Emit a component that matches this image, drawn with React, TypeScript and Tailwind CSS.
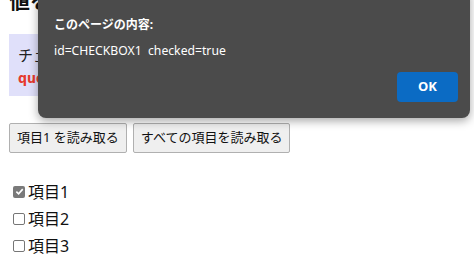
import React from 'react';

const jp = "font-['Noto_Sans','Noto_Sans_CJK_JP',sans-serif]";

function Check({ checked, label }: { checked: boolean; label: string }) {
  return (
    <label className="flex items-center h-[27px] text-[16px] text-[#111]">
      {checked ? (
        <span className="w-[12px] h-[12px] rounded-[2px] bg-[#7a7a7a] flex items-center justify-center ml-[4px] mr-[3px]">
          <svg width="9" height="9" viewBox="0 0 10 10">
            <path d="M1.5 5.2 L4 7.6 L8.6 2.4" stroke="white" strokeWidth="1.8" fill="none" />
          </svg>
        </span>
      ) : (
        <span className="w-[12px] h-[12px] rounded-[2px] border border-[#767676] bg-white ml-[4px] mr-[3px]" />
      )}
      <span>{label}</span>
    </label>
  );
}

export default function App() {
  return (
    <div className={`relative w-[474px] h-[266px] overflow-hidden bg-white ${jp}`}>
      {/* Page */}
      <div className="pl-[9px]">
        <h2 className="text-[21px] font-bold leading-[24px] mt-[-12px] text-[#111]">値を読み取る</h2>
        <div className="mt-[22px] w-[440px] h-[62px] bg-[#e0e0fa] pl-[9px] pt-[10px]">
          <p className="text-[15px] leading-[23px] text-[#222]">チェックボックスの値</p>
          <p className="font-['DejaVu_Sans_Condensed',sans-serif] font-bold text-[14px] leading-[23px] text-[#e63a2e]">querySelector</p>
        </div>
        <div className="flex gap-[6px] mt-[27px]">
          <button className="h-[30px] px-[7px] text-[13px] text-[#111] bg-[#efefef] border border-[#b0b0b0] rounded-[2px]">
            項目1 を読み取る
          </button>
          <button className="h-[30px] px-[7px] text-[13px] text-[#111] bg-[#efefef] border border-[#b0b0b0] rounded-[2px]">
            すべての項目を読み取る
          </button>
        </div>
        <div className="mt-[25px]">
          <Check checked label="項目1" />
          <Check checked={false} label="項目2" />
          <Check checked={false} label="項目3" />
        </div>
      </div>

      {/* Alert dialog */}
      <div className="absolute left-[38px] top-[-10px] w-[432px] h-[128px] bg-[#4b4b4b] rounded-b-[8px] shadow-[0_3px_10px_rgba(0,0,0,0.35)] text-white">
        <div className="pl-[16px] pt-[25px]">
          <div className="text-[12px] font-bold leading-[20px]">このページの内容:</div>
          <div className="text-[12.2px] leading-[20px] mt-[6px] whitespace-pre">id=CHECKBOX1  checked=true</div>
        </div>
        <button className="absolute left-[359px] top-[82px] w-[61px] h-[30px] rounded-[4px] bg-[#0b6bc4] text-[13px] font-bold text-white">
          OK
        </button>
      </div>
    </div>
  );
}
